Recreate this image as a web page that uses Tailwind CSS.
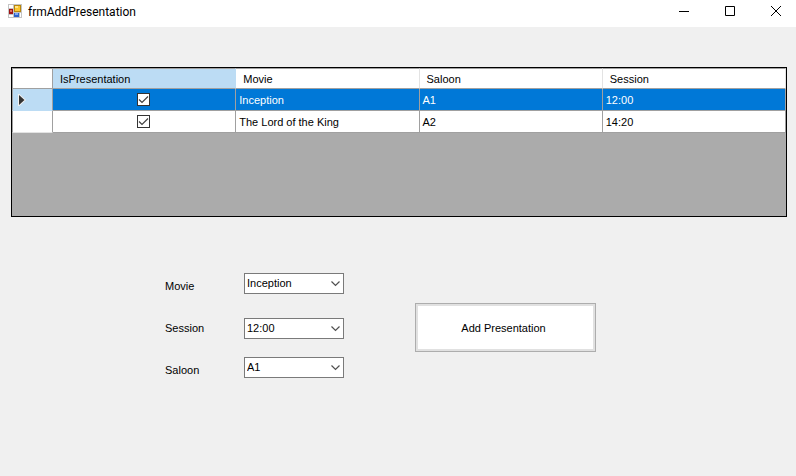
<!DOCTYPE html>
<html lang="en">
<head>
    <meta charset="UTF-8">
    <meta name="viewport" content="width=device-width, initial-scale=1.0">
    <title>frmAddPresentation</title>
    <script src="https://cdn.jsdelivr.net/npm/@tailwindcss/browser@4"></script>
</head>
<body class="bg-[#f0f0f0] min-h-screen text-black text-[11px] leading-[14px] font-['Liberation_Sans',sans-serif]">
    <!-- Title bar -->
    <header class="flex items-start h-[27px] bg-white pl-2">
        <svg class="w-[14px] h-[14px] mr-[6px] mt-1" viewBox="0 0 14 14" shape-rendering="crispEdges">
            <rect width="14" height="14" fill="#c4c4c4"/>
            <rect x="1" y="1" width="4" height="3" fill="#fff"/>
            <rect x="1" y="11" width="4" height="2" fill="#fff"/>
            <rect x="12" y="9" width="1" height="4" fill="#fff"/>
            <rect x="1" y="5" width="4" height="5" fill="#a01515"/>
            <rect x="2" y="6" width="2" height="2" fill="#e0705f"/>
            <rect x="6" y="1" width="7" height="7" fill="#b8860b"/>
            <rect x="7" y="2" width="5" height="5" fill="#fbc62f"/>
            <rect x="7" y="2" width="3" height="2" fill="#ffe48a"/>
            <rect x="6" y="9" width="5" height="4" fill="#2e62c9"/>
            <rect x="7" y="9" width="3" height="2" fill="#7fa8f0"/>
        </svg>
        <h1 class="flex-1 text-[12px] leading-[16px] mt-1 font-[Roboto,sans-serif]">frmAddPresentation</h1>
        <div class="flex gap-[6px]">
            <button type="button" aria-label="Minimize" class="flex items-center justify-center w-10 h-[22px]">
                <svg class="w-[10px] h-[10px]" viewBox="0 0 10 10" shape-rendering="crispEdges"><path d="M0 5h10v1H0z"/></svg>
            </button>
            <button type="button" aria-label="Maximize" class="flex items-center justify-center w-10 h-[22px]">
                <svg class="w-[10px] h-[10px]" viewBox="0 0 10 10" fill="none" stroke="#000"><path d="M.5 .5h9v9h-9z"/></svg>
            </button>
            <button type="button" aria-label="Close" class="flex items-center justify-center w-10 h-[22px]">
                <svg class="w-[10px] h-[10px]" viewBox="0 0 10 10" fill="none" stroke="#000"><path d="M0 0l10 10M10 0L0 10"/></svg>
            </button>
        </div>
    </header>

    <main class="pt-10 pl-[11px] pr-[9px]">
        <!-- Presentations -->
        <div class="h-[150px] bg-[#ababab] border border-black">
            <table class="w-full table-fixed border-separate border-spacing-0 text-left">
                <thead>
                    <tr class="h-[21px] bg-white">
                        <th class="w-[41px] p-0 border-t border-r border-b border-l border-[#a0a0a0]"></th>
                        <th class="py-0 pl-[7px] font-normal bg-[#bcdcf4] border-t border-r border-b border-[#a0a0a0] border-r-[#bcdcf4]">IsPresentation</th>
                        <th class="py-0 pl-[7px] font-normal border-t border-r border-b border-[#a0a0a0] border-r-[#e3e3e3]">Movie</th>
                        <th class="py-0 pl-[7px] font-normal border-t border-r border-b border-[#a0a0a0] border-r-[#e3e3e3]">Saloon</th>
                        <th class="py-0 pl-[7px] font-normal border-t border-r border-b border-[#a0a0a0] border-r-[#e3e3e3]">Session</th>
                    </tr>
                </thead>
                <tbody>
                    <tr class="h-[22px] bg-[#0078d7] text-white">
                        <td class="py-0 pl-[5px] bg-[#bcdcf4] border-r border-b border-l border-[#a0a0a0] border-b-[#bcdcf4]">
                            <svg class="block w-[8px] h-[12px]" viewBox="0 0 8 12"><path d="M1 1v10L6.500 6z" fill="#333" stroke="#f0f0f0" stroke-width="2" paint-order="stroke"/></svg>
                        </td>
                        <td class="py-0 pr-[2px] border-r border-b border-[#a0a0a0]">
                            <label class="relative block w-[13px] h-[13px] mx-auto">
                                <input type="checkbox" checked aria-label="IsPresentation, Inception" class="block appearance-none w-[13px] h-[13px] bg-white border border-[#333]">
                                <svg class="absolute inset-0 w-[13px] h-[13px] pointer-events-none" viewBox="0 0 13 13" fill="none" stroke="#404040" stroke-width="1.2"><path d="M2 6.500l3 3 6-6"/></svg>
                            </label>
                        </td>
                        <td class="py-0 pl-[3px] border-r border-b border-[#a0a0a0]">Inception</td>
                        <td class="py-0 pl-[3px] border-r border-b border-[#a0a0a0]">A1</td>
                        <td class="py-0 pl-[3px] border-r border-b border-[#a0a0a0]">12:00</td>
                    </tr>
                    <tr class="h-[22px] bg-white">
                        <td class="p-0 border-r border-b border-l border-[#a0a0a0] border-b-[#e3e3e3]"></td>
                        <td class="py-0 pr-[2px] border-r border-b border-[#a0a0a0]">
                            <label class="relative block w-[13px] h-[13px] mx-auto">
                                <input type="checkbox" checked aria-label="IsPresentation, The Lord of the King" class="block appearance-none w-[13px] h-[13px] bg-white border border-[#333]">
                                <svg class="absolute inset-0 w-[13px] h-[13px] pointer-events-none" viewBox="0 0 13 13" fill="none" stroke="#404040" stroke-width="1.2"><path d="M2 6.500l3 3 6-6"/></svg>
                            </label>
                        </td>
                        <td class="py-0 pl-[3px] border-r border-b border-[#a0a0a0]">The Lord of the King</td>
                        <td class="py-0 pl-[3px] border-r border-b border-[#a0a0a0]">A2</td>
                        <td class="py-0 pl-[3px] border-r border-b border-[#a0a0a0]">14:20</td>
                    </tr>
                </tbody>
            </table>
        </div>

        <!-- New presentation -->
        <form class="flex items-start pt-14 pl-[154px]" onsubmit="event.preventDefault()">
            <div class="flex flex-col gap-7 w-[79px] pt-[6px]">
                <label for="movie">Movie</label>
                <label for="session">Session</label>
                <label for="saloon">Saloon</label>
            </div>
            <div class="w-[100px]">
                <div class="relative mb-6">
                    <select id="movie" class="block appearance-none w-full h-[21px] pl-[2px] pb-[2px] bg-white border border-[#7a7a7a]">
                        <option>Inception</option>
                        <option>The Lord of the King</option>
                    </select>
                    <svg class="absolute right-1 top-2 w-[9px] h-[6px] pointer-events-none" viewBox="0 0 9 6" fill="none" stroke="#505050" stroke-width="1.2"><path d="M.5 .5l4 4 4-4"/></svg>
                </div>
                <div class="relative mb-[18px]">
                    <select id="session" class="block appearance-none w-full h-[21px] pl-[2px] pb-[2px] bg-white border border-[#7a7a7a]">
                        <option>12:00</option>
                        <option>14:20</option>
                    </select>
                    <svg class="absolute right-1 top-2 w-[9px] h-[6px] pointer-events-none" viewBox="0 0 9 6" fill="none" stroke="#505050" stroke-width="1.2"><path d="M.5 .5l4 4 4-4"/></svg>
                </div>
                <div class="relative">
                    <select id="saloon" class="block appearance-none w-full h-[21px] pl-[2px] pb-[2px] bg-white border border-[#7a7a7a]">
                        <option>A1</option>
                        <option>A2</option>
                    </select>
                    <svg class="absolute right-1 top-2 w-[9px] h-[6px] pointer-events-none" viewBox="0 0 9 6" fill="none" stroke="#505050" stroke-width="1.2"><path d="M.5 .5l4 4 4-4"/></svg>
                </div>
            </div>
            <button type="submit" class="w-[181px] h-[49px] mt-[30px] ml-[71px] pr-1 bg-white border border-[#adadad] inset-ring-2 inset-ring-[#e1e1e1]">Add Presentation</button>
        </form>
    </main>
</body>
</html>
